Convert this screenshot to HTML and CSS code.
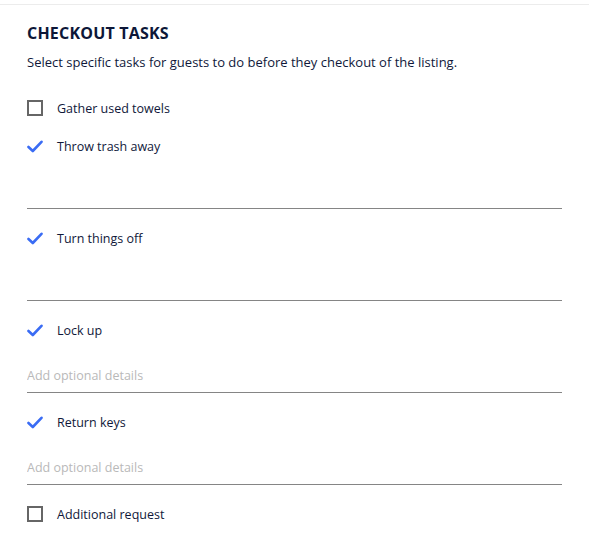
FILE: index.html
```html
<!DOCTYPE html>
<html lang="en">
  <head>
    <meta charset="UTF-8" />
    <meta name="viewport" content="width=device-width, initial-scale=1.0" />
    <title>Checkout tasks</title>
    <link rel="stylesheet" href="styles.css">
  </head>
  <body>
    <div class="panel">
      <h2 class="title">CHECKOUT TASKS</h2>
      <p class="subtitle">Select specific tasks for guests to do before they checkout of the listing.</p>

      <div class="tasks">
        <div class="task">
          <label class="task-head">
            <span class="box"></span>
            <span class="task-name">Gather used towels</span>
          </label>
        </div>

        <div class="task">
          <label class="task-head">
            <svg class="check" viewBox="0 0 16 13"><path d="M1.5 7 L5.8 11 L14.5 1.8" /></svg>
            <span class="task-name">Throw trash away</span>
          </label>
          <div class="task-field"><input type="text" /></div>
        </div>

        <div class="task">
          <label class="task-head">
            <svg class="check" viewBox="0 0 16 13"><path d="M1.5 7 L5.8 11 L14.5 1.8" /></svg>
            <span class="task-name">Turn things off</span>
          </label>
          <div class="task-field"><input type="text" /></div>
        </div>

        <div class="task">
          <label class="task-head">
            <svg class="check" viewBox="0 0 16 13"><path d="M1.5 7 L5.8 11 L14.5 1.8" /></svg>
            <span class="task-name">Lock up</span>
          </label>
          <div class="task-field"><input type="text" placeholder="Add optional details" /></div>
        </div>

        <div class="task">
          <label class="task-head">
            <svg class="check" viewBox="0 0 16 13"><path d="M1.5 7 L5.8 11 L14.5 1.8" /></svg>
            <span class="task-name">Return keys</span>
          </label>
          <div class="task-field"><input type="text" placeholder="Add optional details" /></div>
        </div>

        <div class="task">
          <label class="task-head">
            <span class="box"></span>
            <span class="task-name">Additional request</span>
          </label>
        </div>
      </div>
    </div>
  </body>
</html>
```

FILE: styles.css
```css
* {
  box-sizing: border-box;
  margin: 0;
  padding: 0;
}

body {
  background-color: #ffffff;
  font-family: "Open Sans", "Liberation Sans", sans-serif;
  color: #10183a;
}

.panel {
  margin-top: 4px;
  border-top: 1px solid #ececec;
  padding: 0 27px;
}

.title {
  margin-top: 16px;
  font-size: 16px;
  line-height: 24px;
  font-weight: 700;
  color: #0d1738;
  letter-spacing: 0.2px;
}

.subtitle {
  margin-top: 7px;
  font-size: 13px;
  line-height: 20px;
}

.tasks {
  display: flex;
  flex-direction: column;
  gap: 18px;
  margin-top: 26px;
}

.task-head {
  display: flex;
  align-items: center;
  height: 20px;
  cursor: pointer;
}

.box {
  width: 16px;
  height: 16px;
  border: 2px solid #666666;
  flex-shrink: 0;
}

.check {
  width: 16px;
  height: 13px;
  flex-shrink: 0;
}

.check path {
  fill: none;
  stroke: #3a6cf4;
  stroke-width: 2.6;
  stroke-linecap: round;
  stroke-linejoin: round;
}

.task-name {
  margin-left: 14px;
  font-size: 12.5px;
}

.task-field {
  padding-top: 25px;
  margin-bottom: 1px;
  border-bottom: 1px solid #858585;
}

.task-field input {
  display: block;
  width: 100%;
  height: 27px;
  padding: 0 0 7px 0;
  border: none;
  outline: none;
  font-family: inherit;
  font-size: 12.5px;
  line-height: 20px;
  color: #10183a;
  background: transparent;
}

.task-field input::placeholder {
  color: #b9b9b9;
}
```
